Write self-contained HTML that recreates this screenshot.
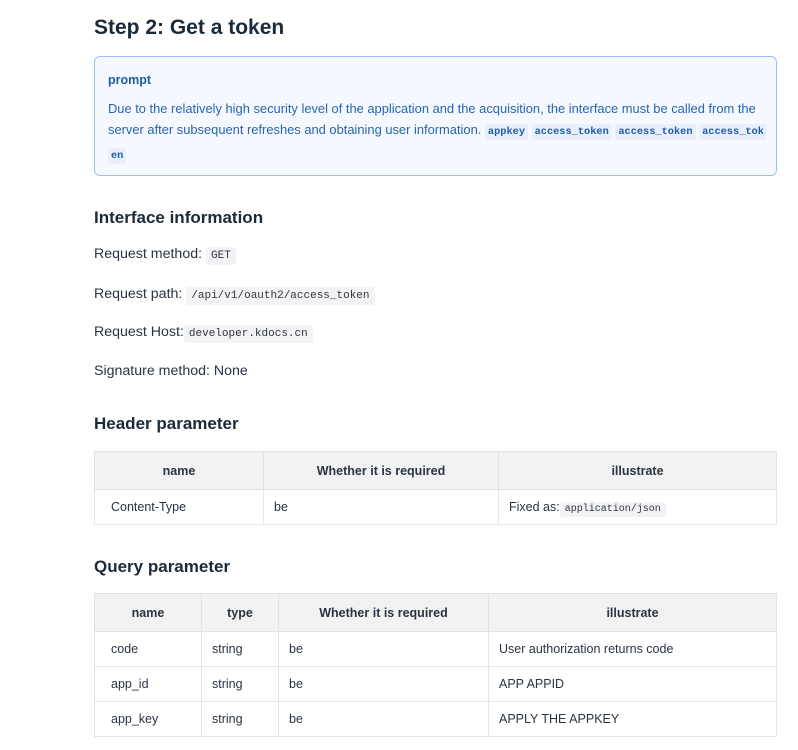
<!DOCTYPE html>
<html><head><meta charset="utf-8"><style>
*{margin:0;padding:0;box-sizing:border-box}
body{width:798px;height:750px;background:#fff;font-family:"Liberation Sans",sans-serif;color:#1f2d3d;position:relative;overflow:hidden}
.a{position:absolute;white-space:nowrap}
h1{position:absolute;left:94px;top:16px;font-size:21px;font-weight:bold;color:#1b2a3a}
h2{position:absolute;left:94px;font-size:17px;font-weight:bold;color:#1b2a3a}
.p{position:absolute;left:94px;font-size:14.2px;color:#2a3442}
code{font-family:"Liberation Mono",monospace;font-size:11px;background:#f1f3f5;border-radius:3px;padding:3px 5px;color:#334}
.box{position:absolute;left:94px;top:56px;width:683px;height:120px;border:1px solid #9cc0f5;background:#f5f8ff;border-radius:6px}
.box code{background:#e8effb;color:#1d5ca8;font-weight:bold;font-size:10.3px;padding:2px 3px}
table{position:absolute;left:94px;width:683px;border-collapse:collapse;font-size:12.5px;color:#2a3442}
th{background:#f2f2f2;font-weight:bold;height:38px;border:1px solid #e2e2e2;text-align:center}
td{height:35px;border:1px solid #e6e6e6;padding-left:16px}
td.x{padding-left:10px}
</style></head><body>
<h1>Step 2: Get a token</h1>
<div class="box">
<div class="a" style="left:13px;top:16px;font-size:12.5px;font-weight:bold;color:#1d5ca8">prompt</div>
<div class="a" style="left:13px;top:41px;width:664px;white-space:normal;font-size:12.9px;line-height:21px;color:#2566b0">Due to the relatively high security level of the application and the acquisition, the interface must be called from the server after subsequent refreshes and obtaining user information. <code>appkey</code> <code>access_token</code> <code>access_token</code> <code>access_tok</code><br><code>en</code></div>
</div>
<h2 style="top:208px">Interface information</h2>
<div class="p" style="top:246px">Request method: <code>GET</code></div>
<div class="p" style="top:286px">Request path: <code>/api/v1/oauth2/access_token</code></div>
<div class="p" style="top:324px">Request Host:<code>developer.kdocs.cn</code></div>
<div class="p" style="top:363px">Signature method: None</div>
<h2 style="top:414px">Header parameter</h2>
<table style="top:451px">
<tr><th style="width:169px">name</th><th style="width:235px">Whether it is required</th><th>illustrate</th></tr>
<tr><td>Content-Type</td><td class="x">be</td><td class="x">Fixed as:<code style="font-size:10px;padding:2px 5px">application/json</code></td></tr>
</table>
<h2 style="top:557px">Query parameter</h2>
<table style="top:593px">
<tr><th style="width:107px">name</th><th style="width:77px">type</th><th style="width:210px">Whether it is required</th><th>illustrate</th></tr>
<tr><td>code</td><td class="x">string</td><td class="x">be</td><td class="x">User authorization returns code</td></tr>
<tr><td>app_id</td><td class="x">string</td><td class="x">be</td><td class="x">APP APPID</td></tr>
<tr><td>app_key</td><td class="x">string</td><td class="x">be</td><td class="x">APPLY THE APPKEY</td></tr>
</table>
</body></html>
